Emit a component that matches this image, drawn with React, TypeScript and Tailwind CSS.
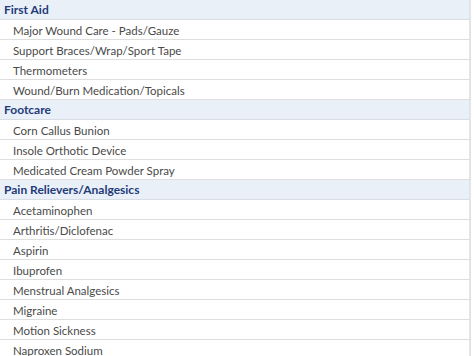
import React from "react";

const groups: { title: string; items: string[] }[] = [
  {
    title: "First Aid",
    items: [
      "Major Wound Care - Pads/Gauze",
      "Support Braces/Wrap/Sport Tape",
      "Thermometers",
      "Wound/Burn Medication/Topicals",
    ],
  },
  {
    title: "Footcare",
    items: ["Corn Callus Bunion", "Insole Orthotic Device", "Medicated Cream Powder Spray"],
  },
  {
    title: "Pain Relievers/Analgesics",
    items: [
      "Acetaminophen",
      "Arthritis/Diclofenac",
      "Aspirin",
      "Ibuprofen",
      "Menstrual Analgesics",
      "Migraine",
      "Motion Sickness",
      "Naproxen Sodium",
    ],
  },
];

export default function App() {
  return (
    <div className="w-[474px] h-[356px] overflow-hidden bg-white" style={{ fontFamily: "Lato, 'Noto Sans', sans-serif" }}>
      <div className="w-[471px] border-r-2 border-[#e2e4e8]">
        {groups.map((g) => (
          <div key={g.title}>
            <div className="h-[20px] flex items-center pl-[4px] pt-[1px] bg-[#e9f0f8] border-b border-[#d8dde3] text-[12px] font-bold text-[#1f3b78]">
              {g.title}
            </div>
            {g.items.map((it) => (
              <div
                key={it}
                className="h-[20px] flex items-center pl-[13px] pt-[2px] border-b border-[#dedede] text-[11.5px] text-[#4a4a4a]"
              >
                {it}
              </div>
            ))}
          </div>
        ))}
      </div>
    </div>
  );
}
